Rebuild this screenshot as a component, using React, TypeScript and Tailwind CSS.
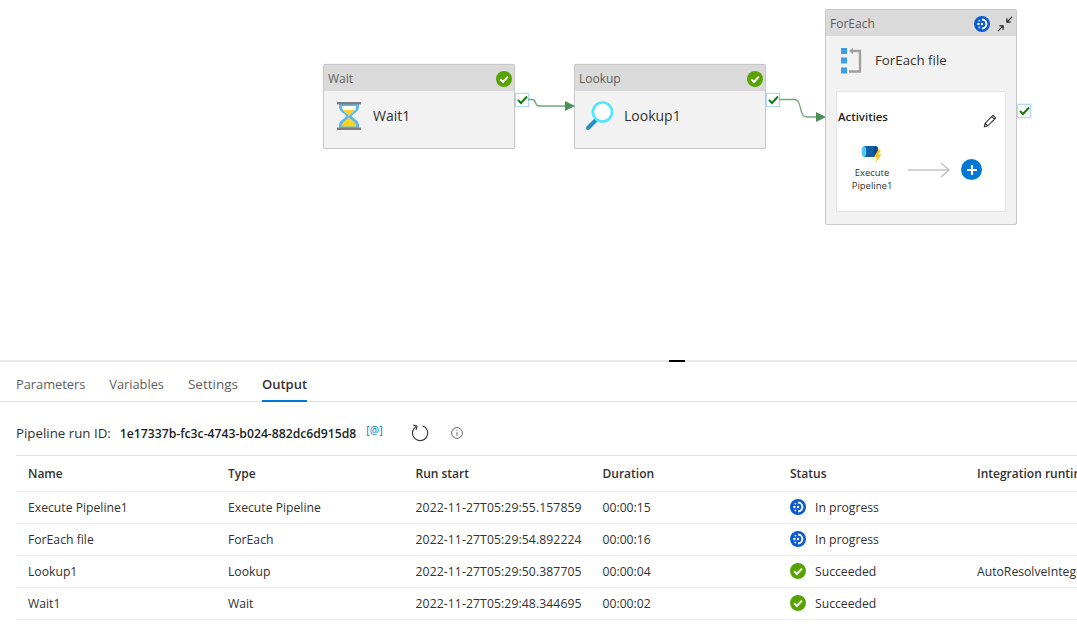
const FONT = "font-['Open_Sans','Noto_Sans',sans-serif]";

function SuccessIcon({ size = 16 }: { size?: number }) {
  return (
    <svg width={size} height={size} viewBox="0 0 16 16" className="shrink-0">
      <circle cx="8" cy="8" r="8" fill="#57a300" />
      <path d="M4.2 8.3 L7 11 L11.9 5.6" fill="none" stroke="#fff" strokeWidth="2" />
    </svg>
  );
}

function ProgressIcon({ size = 16 }: { size?: number }) {
  return (
    <svg width={size} height={size} viewBox="0 0 16 16" className="shrink-0">
      <circle cx="8" cy="8" r="8" fill="#0a5bd3" />
      <path d="M8 3.6 A4.4 4.4 0 0 1 8 12.4" fill="none" stroke="#fff" strokeWidth="2" />
      <circle cx="4.4" cy="8" r="1.2" fill="#fff" />
      <circle cx="8" cy="8" r="1.2" fill="#fff" />
      <circle cx="5.4" cy="4.6" r="0.9" fill="#fff" />
      <circle cx="5.4" cy="11.4" r="0.9" fill="#fff" />
    </svg>
  );
}

function CheckPort() {
  return (
    <div className="flex h-[14px] w-[14px] items-center justify-center border border-[#b5d8f3] bg-white shadow-[0_0_1px_#8cc4ee]">
      <svg width="11" height="10" viewBox="0 0 11 10">
        <path d="M1 5 L4 8 L10 1.5" fill="none" stroke="#107c10" strokeWidth="2" />
      </svg>
    </div>
  );
}

function Hourglass() {
  return (
    <svg width="26" height="30" viewBox="0 0 26 30">
      <path d="M3 3 H23 V6 C23 11 16 13 16 15 C16 17 23 19 23 24 V27 H3 V24 C3 19 10 17 10 15 C10 13 3 11 3 6 Z" fill="#5bb8f0" />
      <path d="M6 5 H20 V6 C20 10 14 12 13 15 C12 12 6 10 6 6 Z" fill="#fff" />
      <path d="M7.5 9 H18.5 C17.5 11 14 13 13 15 C12 13 8.5 11 7.5 9 Z" fill="#ffd21f" />
      <path d="M5.5 25.5 C6 21 11 19 13 16.5 C15 19 20 21 20.5 25.5 Z" fill="#ffd21f" />
      <rect x="1" y="1" width="24" height="2.4" fill="#7d7d7d" />
      <rect x="1" y="26.6" width="24" height="2.4" fill="#7d7d7d" />
    </svg>
  );
}

function Magnifier() {
  return (
    <svg width="30" height="32" viewBox="0 0 30 32">
      <path d="M11 20 L3 28" stroke="#1f8fc4" strokeWidth="4" strokeLinecap="round" />
      <circle cx="17.5" cy="12" r="9.5" fill="#fff" stroke="#50e6ff" strokeWidth="2.6" />
    </svg>
  );
}

function ForEachIcon() {
  return (
    <svg width="22" height="28" viewBox="0 0 22 28">
      <rect x="1" y="1" width="6" height="6" fill="#3a9eea" />
      <rect x="1" y="10.5" width="6" height="6" fill="#3a9eea" />
      <rect x="1" y="20.5" width="6" height="6" fill="#3a9eea" />
      <path d="M13 4 H20 V24.5 H9" fill="none" stroke="#a0a0a0" strokeWidth="2.4" />
      <path d="M9 4 L13 0.8 V7.2 Z" fill="#a0a0a0" />
    </svg>
  );
}

function ExecuteIcon() {
  return (
    <svg width="22" height="20" viewBox="0 0 22 20">
      <path d="M3 3 H15 V14 H3 Z" fill="#0f5ea8" />
      <ellipse cx="3" cy="8.5" rx="2.4" ry="5.5" fill="#50c8f0" />
      <ellipse cx="15" cy="8.5" rx="2.4" ry="5.5" fill="#0a4a86" />
      <path d="M17 7 L13 14 H16 L14.5 20 L20.5 11.5 H17.5 L20 7 Z" fill="#f5c518" />
    </svg>
  );
}

function ActivityNode({ type, name, icon, className }: { type: string; name: string; icon: React.ReactNode; className: string }) {
  return (
    <div className={`absolute flex h-[85px] w-[192px] flex-col rounded-[2px] border border-[#c8c8c8] bg-[#f2f2f2] shadow-[0_0_1px_rgba(0,0,0,0.2)] ${className}`}>
      <div className="flex h-[26px] shrink-0 items-center justify-between bg-[#dadada] pl-1 pr-[2px] pt-[2px] text-[12px] text-[#605e5c]">
        <span>{type}</span>
        <SuccessIcon />
      </div>
      <div className="flex flex-1 items-center pb-2">
        <div className="flex w-[49px] justify-center">{icon}</div>
        <span className="text-[14px] text-[#323130]">{name}</span>
      </div>
    </div>
  );
}

function ForEachNode() {
  return (
    <div className="absolute left-[825px] top-[9px] flex h-[216px] w-[192px] flex-col rounded-[2px] border border-[#c8c8c8] bg-[#f2f2f2]">
      <div className="flex h-[26px] shrink-0 items-center justify-between bg-[#dadada] pl-1 pr-[3px] pt-[2px] text-[12px] text-[#605e5c]">
        <span>ForEach</span>
        <div className="flex items-center gap-[7px]">
          <ProgressIcon />
          <svg width="16" height="16" viewBox="0 0 17 17" fill="none" stroke="#201f1e" strokeWidth="1.3">
            <path d="M16 1 L10.5 6.5 M10.5 2.5 V6.5 H14.5" />
            <path d="M1 16 L6.5 10.5 M2.5 10.5 H6.5 V14.5" />
          </svg>
        </div>
      </div>
      <div className="mb-[6px] flex h-[49px] shrink-0 items-center">
        <div className="ml-[14px] w-[35px]"><ForEachIcon /></div>
        <span className="text-[13.3px] text-[#323130]">ForEach file</span>
      </div>
      <div className="mx-[10px] flex h-[121px] flex-col border border-[#e6e6e6] bg-white">
        <div className="flex items-start justify-between pl-[1px] pr-[8px] pt-[16px]">
          <span className="text-[11.4px] font-semibold leading-[17px] text-[#201f1e]">Activities</span>
          <svg width="14" height="14" viewBox="0 0 16 16" fill="none" stroke="#323130" strokeWidth="1.2" className="mt-[6px]">
            <path d="M1.5 14.5 L2.5 10.5 L11.5 1.5 L14.5 4.5 L5.5 13.5 Z M10 3 L13 6 M2.5 10.5 L5.5 13.5" />
          </svg>
        </div>
        <div className="mt-[15px] flex items-start">
          <div className="flex w-[70px] flex-col items-center">
            <ExecuteIcon />
            <span className="mt-[4px] text-center text-[9.5px] leading-[12.5px] text-[#323130]">Execute<br />Pipeline1</span>
          </div>
          <svg width="44" height="16" viewBox="0 0 44 16" fill="none" stroke="#c4c4c4" strokeWidth="1.6" className="mt-[19px] shrink-0">
            <path d="M1 8 H42 M34 1 L42 8 L34 15" />
          </svg>
          <div className="ml-[10px] mt-[16px] flex h-[21px] w-[21px] items-center justify-center rounded-full bg-[#0078d4]">
            <svg width="10" height="10" viewBox="0 0 10 10" stroke="#fff" strokeWidth="2.2"><path d="M5 0 V10 M0 5 H10" /></svg>
          </div>
        </div>
      </div>
    </div>
  );
}

function Canvas() {
  return (
    <div className="relative h-[360px] overflow-hidden">
      <ActivityNode type="Wait" name="Wait1" icon={<Hourglass />} className="left-[323px] top-[64px]" />
      <ActivityNode type="Lookup" name="Lookup1" icon={<Magnifier />} className="left-[574px] top-[64px]" />
      <ForEachNode />
      <div className="absolute left-[515px] top-[93px]"><CheckPort /></div>
      <div className="absolute left-[766px] top-[93px]"><CheckPort /></div>
      <div className="absolute left-[1017px] top-[104px]"><CheckPort /></div>
      <svg width="1077" height="360" className="pointer-events-none absolute left-0 top-0" fill="none">
        <path d="M528 99.5 H532 C537 99.5 534 106 539 106 H565" stroke="#6fa67c" strokeWidth="1.3" />
        <path d="M565 101 L575 106 L565 111 Z" fill="#4b8f5b" />
        <path d="M779 99.5 H794 C803 99.5 798 117 807 117 H816" stroke="#6fa67c" strokeWidth="1.3" />
        <path d="M816 112 L826 117 L816 122 Z" fill="#4b8f5b" />
      </svg>
    </div>
  );
}

const rows = [
  { name: "Execute Pipeline1", type: "Execute Pipeline", start: "2022-11-27T05:29:55.1578591", duration: "00:00:15", done: false, ir: "" },
  { name: "ForEach file", type: "ForEach", start: "2022-11-27T05:29:54.8922240", duration: "00:00:16", done: false, ir: "" },
  { name: "Lookup1", type: "Lookup", start: "2022-11-27T05:29:50.3877051", duration: "00:00:04", done: true, ir: "AutoResolveIntegrationRuntime" },
  { name: "Wait1", type: "Wait", start: "2022-11-27T05:29:48.3446952", duration: "00:00:02", done: true, ir: "" },
];

const GRID = "grid grid-cols-[200px_187.5px_187px_187.5px_187px_300px] border-b border-[#edebe9]";

function Cell({ children }: { children: React.ReactNode }) {
  return <div className="overflow-hidden whitespace-nowrap pl-3 pr-[2px]">{children}</div>;
}

function OutputPanel() {
  return (
    <div className="border-t-2 border-[#edebe9]">
      <div className="relative">
        <div className="absolute left-[669px] top-[-2px] h-[2px] w-4 bg-black" />
      </div>
      <div className="flex h-[40px] gap-6 border-b border-[#e1dfdd] px-4 text-[12.8px]">
        <div className="flex items-center pt-[6px] text-[#605e5c]">Parameters</div>
        <div className="flex items-center pt-[6px] text-[#605e5c]">Variables</div>
        <div className="flex items-center pt-[6px] text-[13.5px] text-[#605e5c]">Settings</div>
        <div className="-mb-px flex items-center border-b-2 border-[#0078d4] pt-[7px] text-[13px] font-semibold text-[#323130]">Output</div>
      </div>
      <div className="flex h-[53px] items-center px-4 pt-[11px]">
        <span className="text-[13.3px] text-[#323130]">Pipeline run ID:</span>
        <span className="ml-[9px] text-[12.2px] font-semibold text-[#201f1e]">1e17337b-fc3c-4743-b024-882dc6d915d8</span>
        <span className="mb-[8px] ml-[10px] text-[10.5px] leading-none text-[#0078d4]">[@]</span>
        <svg width="18" height="18" viewBox="0 0 18 18" fill="none" stroke="#323130" strokeWidth="1.1" className="mb-[2px] ml-[28px]">
          <path d="M5 2.6 A7.6 7.6 0 1 0 11.5 1.8" />
          <path d="M2.2 1 L6 2.2 L5 6" />
        </svg>
        <svg width="12" height="12" viewBox="0 0 12 12" fill="none" stroke="#605e5c" strokeWidth="0.9" className="mb-[2px] ml-[22px]">
          <circle cx="6" cy="6" r="5.4" />
          <path d="M6 5 V9 M6 3 V4" />
        </svg>
      </div>
      <div className="ml-4 overflow-hidden border-t border-[#e1dfdd] text-[12.2px] text-[#323130]">
        <div className={`${GRID} h-[36px] items-center text-[12px] font-semibold`}>
          <Cell>Name</Cell>
          <Cell>Type</Cell>
          <Cell>Run start</Cell>
          <Cell>Duration</Cell>
          <Cell>Status</Cell>
          <Cell>Integration runtime</Cell>
        </div>
        {rows.map((r) => (
          <div key={r.name} className={`${GRID} h-[32px] items-center pt-[2px]`}>
            <Cell>{r.name}</Cell>
            <Cell>{r.type}</Cell>
            <Cell>
              <div className="w-[166px] overflow-hidden tracking-[0.1px]">{r.start}</div>
            </Cell>
            <Cell>{r.duration}</Cell>
            <Cell>
              <div className="flex items-center gap-[9px]">
                <div className="mb-[2px] flex">{r.done ? <SuccessIcon /> : <ProgressIcon />}</div>
                <span>{r.done ? "Succeeded" : "In progress"}</span>
              </div>
            </Cell>
            <Cell>{r.ir}</Cell>
          </div>
        ))}
      </div>
    </div>
  );
}

export default function App() {
  return (
    <div className={`h-[644px] w-[1077px] overflow-hidden bg-white ${FONT}`}>
      <Canvas />
      <OutputPanel />
    </div>
  );
}
